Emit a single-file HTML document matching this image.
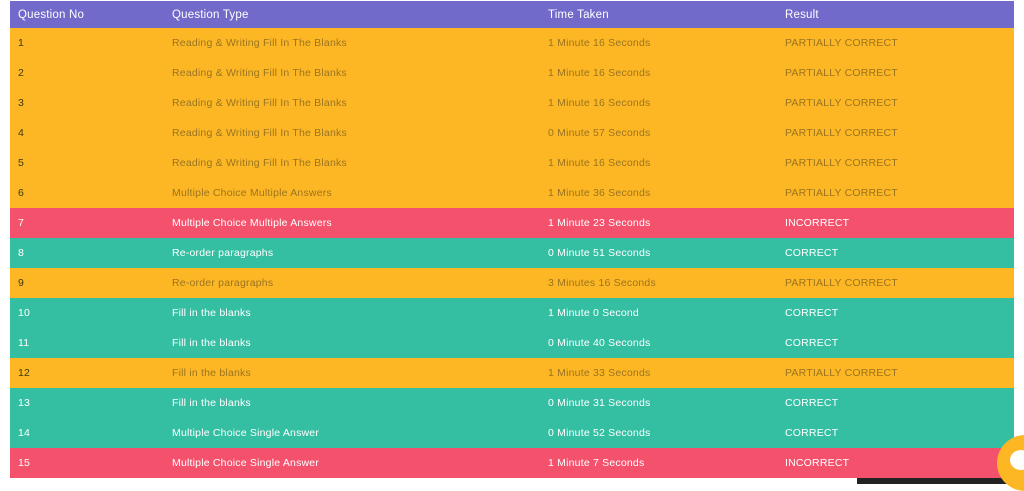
<!DOCTYPE html><html><head><style>
body{margin:0;width:1024px;height:482px;background:#fff;overflow:hidden;position:relative;font-family:"Liberation Sans",sans-serif;font-size:10.5px}
.t{position:absolute;left:10px;top:1px;width:1004px}
.row{display:flex;height:30px;align-items:center}
.row div{padding-left:8px;white-space:nowrap;letter-spacing:0.2px}
.row div:nth-child(1){width:146px}.row div:nth-child(2){width:368px}.row div:nth-child(3){width:229px}
.h{background:#716aca;color:#fff;font-size:11.5px;height:27px}
.o{background:#fdb724;color:#9a7420}
.o div:first-child{color:#3b3a10}
.r{background:#f4516c;color:#fff}
.g{background:#34bfa3;color:#fff}
</style></head><body>
<div class="t">
<div class="row h"><div>Question No</div><div>Question Type</div><div>Time Taken</div><div>Result</div></div>
<div class="row o"><div>1</div><div>Reading &amp; Writing Fill In The Blanks</div><div>1 Minute 16 Seconds</div><div>PARTIALLY CORRECT</div></div>
<div class="row o"><div>2</div><div>Reading &amp; Writing Fill In The Blanks</div><div>1 Minute 16 Seconds</div><div>PARTIALLY CORRECT</div></div>
<div class="row o"><div>3</div><div>Reading &amp; Writing Fill In The Blanks</div><div>1 Minute 16 Seconds</div><div>PARTIALLY CORRECT</div></div>
<div class="row o"><div>4</div><div>Reading &amp; Writing Fill In The Blanks</div><div>0 Minute 57 Seconds</div><div>PARTIALLY CORRECT</div></div>
<div class="row o"><div>5</div><div>Reading &amp; Writing Fill In The Blanks</div><div>1 Minute 16 Seconds</div><div>PARTIALLY CORRECT</div></div>
<div class="row o"><div>6</div><div>Multiple Choice Multiple Answers</div><div>1 Minute 36 Seconds</div><div>PARTIALLY CORRECT</div></div>
<div class="row r"><div>7</div><div>Multiple Choice Multiple Answers</div><div>1 Minute 23 Seconds</div><div>INCORRECT</div></div>
<div class="row g"><div>8</div><div>Re-order paragraphs</div><div>0 Minute 51 Seconds</div><div>CORRECT</div></div>
<div class="row o"><div>9</div><div>Re-order paragraphs</div><div>3 Minutes 16 Seconds</div><div>PARTIALLY CORRECT</div></div>
<div class="row g"><div>10</div><div>Fill in the blanks</div><div>1 Minute 0 Second</div><div>CORRECT</div></div>
<div class="row g"><div>11</div><div>Fill in the blanks</div><div>0 Minute 40 Seconds</div><div>CORRECT</div></div>
<div class="row o"><div>12</div><div>Fill in the blanks</div><div>1 Minute 33 Seconds</div><div>PARTIALLY CORRECT</div></div>
<div class="row g"><div>13</div><div>Fill in the blanks</div><div>0 Minute 31 Seconds</div><div>CORRECT</div></div>
<div class="row g"><div>14</div><div>Multiple Choice Single Answer</div><div>0 Minute 52 Seconds</div><div>CORRECT</div></div>
<div class="row r"><div>15</div><div>Multiple Choice Single Answer</div><div>1 Minute 7 Seconds</div><div>INCORRECT</div></div>
</div>
<div style="position:absolute;left:857px;top:478px;width:170px;height:6px;background:#222"></div>
<div style="position:absolute;left:997px;top:435px;width:56px;height:56px;border-radius:50%;background:#fdb724"></div>
<div style="position:absolute;left:1010px;top:450px;width:22px;height:20px;border-radius:50%;background:#fff"></div>
</body></html>
